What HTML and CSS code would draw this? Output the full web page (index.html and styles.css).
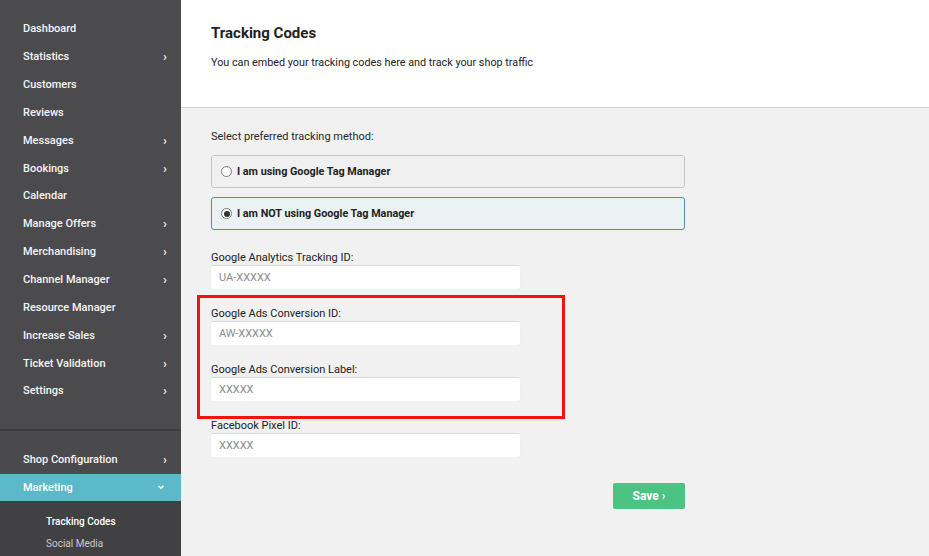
FILE: index.html
```html
<!DOCTYPE html>
<html>
<head>
<meta charset="utf-8">
<link rel="stylesheet" href="styles.css">
</head>
<body>
<div class="app">
  <aside class="sidebar">
    <nav class="menu">
      <div class="item">Dashboard</div>
      <div class="item">Statistics<span class="chev">›</span></div>
      <div class="item">Customers</div>
      <div class="item">Reviews</div>
      <div class="item">Messages<span class="chev">›</span></div>
      <div class="item">Bookings<span class="chev">›</span></div>
      <div class="item">Calendar</div>
      <div class="item">Manage Offers<span class="chev">›</span></div>
      <div class="item">Merchandising<span class="chev">›</span></div>
      <div class="item">Channel Manager<span class="chev">›</span></div>
      <div class="item">Resource Manager</div>
      <div class="item">Increase Sales<span class="chev">›</span></div>
      <div class="item">Ticket Validation<span class="chev">›</span></div>
      <div class="item">Settings<span class="chev">›</span></div>
    </nav>
    <nav class="menu bottom">
      <div class="item">Shop Configuration<span class="chev">›</span></div>
      <div class="item active">Marketing<svg class="down" width="8" height="6" viewBox="0 0 8 6"><path d="M1.5 1.8 L4 4.2 L6.5 1.8" fill="none" stroke="#fff" stroke-width="1.6"/></svg></div>
      <div class="submenu">
        <div class="sub current">Tracking Codes</div>
        <div class="sub">Social Media</div>
      </div>
    </nav>
  </aside>
  <main class="main">
    <header class="head">
      <h1>Tracking Codes</h1>
      <p>You can embed your tracking codes here and track your shop traffic</p>
    </header>
    <section class="form">
      <div class="intro">Select preferred tracking method:</div>
      <label class="option"><span class="radio"></span>I am using Google Tag Manager</label>
      <label class="option selected"><span class="radio on"></span>I am NOT using Google Tag Manager</label>
      <div class="field first">
        <div class="lbl">Google Analytics Tracking ID:</div>
        <div class="input">UA-XXXXX</div>
      </div>
      <div class="highlight">
        <div class="field">
          <div class="lbl">Google Ads Conversion ID:</div>
          <div class="input">AW-XXXXX</div>
        </div>
        <div class="field">
          <div class="lbl">Google Ads Conversion Label:</div>
          <div class="input">XXXXX</div>
        </div>
      </div>
      <div class="field fb">
        <div class="lbl">Facebook Pixel ID:</div>
        <div class="input">XXXXX</div>
      </div>
      <div class="actions">
        <button class="save">Save ›</button>
      </div>
    </section>
  </main>
</div>
</body>
</html>
```

FILE: styles.css
```css
* { box-sizing: border-box; }
html, body { margin: 0; padding: 0; }
body {
  font-family: Roboto, "Liberation Sans", Arial, sans-serif;
  width: 929px;
  height: 556px;
  overflow: hidden;
  background: #f1f1f1;
}
.app { display: flex; height: 556px; overflow: hidden; }
.sidebar {
  width: 181px;
  flex: none;
  background: #4b4b4d;
  display: flex;
  flex-direction: column;
  overflow: hidden;
}
.menu { padding-top: 15px; }
.item {
  height: 27.85px;
  display: flex;
  align-items: center;
  justify-content: space-between;
  padding: 0 14px 0 23px;
  color: #f4f4f4;
  font-size: 11px;
  font-weight: 500;
}
.chev { font-size: 13px; font-weight: 700; color: #e8e8e8; line-height: 1; }
.menu.bottom {
  margin-top: 24px;
  border-top: 2px solid #3c3c3e;
  padding-top: 15px;
  background: #4a4a4c;
  flex: 1;
}
.item.active {
  background: #5bb9c9;
  height: 27px;
  color: #fff;
}
.down { margin-right: 2px; }
.submenu {
  background: #414143;
  padding-top: 10px;
  height: 100%;
}
.sub {
  padding-left: 46px;
  height: 22px;
  line-height: 22px;
  font-size: 10px;
  color: #c9c9c9;
}
.sub.current { color: #fff; font-weight: 500; }
.main { flex: 1; display: flex; flex-direction: column; }
.head {
  background: #fff;
  height: 108px;
  border-bottom: 1px solid #cfcfcf;
  padding: 23px 0 0 30px;
}
.head h1 {
  margin: 0;
  font-size: 15px;
  font-weight: 700;
  color: #222;
  line-height: 20px;
}
.head p {
  margin: 13px 0 0;
  font-size: 10.8px;
  color: #222;
  line-height: 14px;
}
.form { padding: 22px 0 0 30px; display: flex; flex-direction: column; }
.intro { font-size: 11px; color: #2a2a2a; line-height: 14px; margin-bottom: 11px; }
.option {
  width: 474px;
  height: 33px;
  border: 1px solid #c6c6c6;
  border-radius: 3px;
  background: #f0f0f0;
  display: flex;
  align-items: center;
  padding-left: 9px;
  font-size: 10.8px;
  font-weight: 700;
  color: #222;
  margin-bottom: 9px;
}
.option.selected {
  background: #ebf2f4;
  border-color: #4d8fa3;
  height: 33px;
}
.radio {
  width: 11px;
  height: 11px;
  border-radius: 50%;
  border: 1px solid #777;
  background: #fff;
  margin-right: 5px;
  display: flex;
  align-items: center;
  justify-content: center;
}
.radio.on::after {
  content: "";
  width: 6px;
  height: 6px;
  border-radius: 50%;
  background: #333;
}
.field { display: flex; flex-direction: column; }
.field.first { margin-top: 12px; }
.lbl { font-size: 11px; color: #222; line-height: 14px; margin-bottom: 0; }
.input {
  width: 309px;
  height: 24px;
  background: #fff;
  border-top: 1px solid #dcdcdc;
  border-radius: 2px;
  box-shadow: 0 0 1px rgba(0,0,0,0.08);
  font-size: 11px;
  color: #8c8c8c;
  line-height: 23px;
  padding-left: 8px;
}
.highlight {
  margin-left: -14px;
  margin-top: 6px;
  width: 368px;
  border: 3px solid #f2140c;
  padding: 9px 0 15px 11px;
  display: flex;
  flex-direction: column;
  gap: 18px;
}
.field.fb { margin-top: 0; }
.actions { width: 474px; display: flex; justify-content: flex-end; margin-top: 26px; }
.save {
  width: 72px;
  height: 26px;
  border: none;
  border-radius: 2px;
  background: #4cc283;
  color: #fff;
  font-family: Roboto, "Liberation Sans", Arial, sans-serif;
  font-size: 12px;
  font-weight: 700;
  padding: 0;
}
```
